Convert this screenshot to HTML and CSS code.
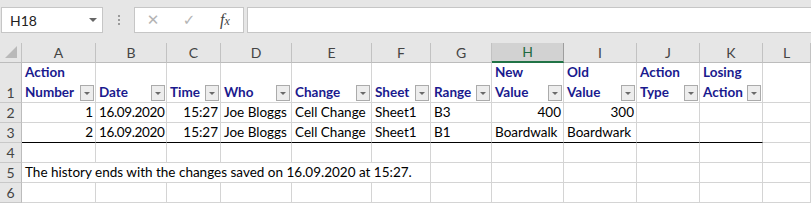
FILE: index.html
```html
<!DOCTYPE html>
<html lang="en">
<head>
    <meta charset="UTF-8">
    <title>History</title>
    <link rel="stylesheet" href="styles.css">
</head>
<body>
    <div class="toolbar">
        <div class="namebox">
            <span>H18</span>
            <span class="caret"></span>
        </div>
        <div class="grip"><i></i><i></i><i></i></div>
        <div class="fbuttons">
            <span class="fb cancel">✕</span>
            <span class="fb enter">✓</span>
            <span class="fb fx">f<small>x</small></span>
        </div>
        <div class="formula"></div>
    </div>

    <div class="sheet">
        <!-- column headers -->
        <div class="hd corner"><span class="tri"></span></div>
        <div class="hd">A</div>
        <div class="hd">B</div>
        <div class="hd">C</div>
        <div class="hd">D</div>
        <div class="hd">E</div>
        <div class="hd">F</div>
        <div class="hd">G</div>
        <div class="hd sel">H</div>
        <div class="hd">I</div>
        <div class="hd">J</div>
        <div class="hd">K</div>
        <div class="hd">L</div>

        <!-- row 1: table header -->
        <div class="rh tall">1</div>
        <div class="c th"><span>Action<br>Number</span><b class="flt"></b></div>
        <div class="c th"><span>Date</span><b class="flt"></b></div>
        <div class="c th"><span>Time</span><b class="flt"></b></div>
        <div class="c th"><span>Who</span><b class="flt"></b></div>
        <div class="c th"><span>Change</span><b class="flt"></b></div>
        <div class="c th"><span>Sheet</span><b class="flt"></b></div>
        <div class="c th"><span>Range</span><b class="flt"></b></div>
        <div class="c th"><span>New<br>Value</span><b class="flt"></b></div>
        <div class="c th"><span>Old<br>Value</span><b class="flt"></b></div>
        <div class="c th"><span>Action<br>Type</span><b class="flt"></b></div>
        <div class="c th"><span>Losing<br>Action</span><b class="flt"></b></div>
        <div class="c"></div>

        <!-- row 2 -->
        <div class="rh">2</div>
        <div class="c num">1</div>
        <div class="c date">16.09.2020</div>
        <div class="c num">15:27</div>
        <div class="c">Joe Bloggs</div>
        <div class="c">Cell Change</div>
        <div class="c">Sheet1</div>
        <div class="c">B3</div>
        <div class="c num">400</div>
        <div class="c num">300</div>
        <div class="c"></div>
        <div class="c"></div>
        <div class="c"></div>

        <!-- row 3 -->
        <div class="rh">3</div>
        <div class="c num last">2</div>
        <div class="c date last">16.09.2020</div>
        <div class="c num last">15:27</div>
        <div class="c last">Joe Bloggs</div>
        <div class="c last">Cell Change</div>
        <div class="c last">Sheet1</div>
        <div class="c last">B1</div>
        <div class="c last">Boardwalk</div>
        <div class="c last">Boardwark</div>
        <div class="c last"></div>
        <div class="c last"></div>
        <div class="c"></div>

        <!-- row 4 -->
        <div class="rh">4</div>
        <div class="c"></div><div class="c"></div><div class="c"></div><div class="c"></div>
        <div class="c"></div><div class="c"></div><div class="c"></div><div class="c"></div>
        <div class="c"></div><div class="c"></div><div class="c"></div><div class="c"></div>

        <!-- row 5: note runs over A to F -->
        <div class="rh">5</div>
        <div class="c note">The history ends with the changes saved on 16.09.2020 at 15:27.</div>
        <div class="c"></div><div class="c"></div><div class="c"></div><div class="c"></div>
        <div class="c"></div><div class="c"></div>

        <!-- row 6 -->
        <div class="rh">6</div>
        <div class="c"></div><div class="c"></div><div class="c"></div><div class="c"></div>
        <div class="c"></div><div class="c"></div><div class="c"></div><div class="c"></div>
        <div class="c"></div><div class="c"></div><div class="c"></div><div class="c"></div>
    </div>
</body>
</html>
```

FILE: styles.css
```css
body {
    margin: 0;
    width: 811px;
    height: 204px;
    overflow: hidden;
    background: #fff;
    font-family: Lato, "Open Sans", sans-serif;
    font-size: 13.5px;
    color: #000;
}

/* formula bar */
.toolbar {
    display: flex;
    height: 43px;
    box-sizing: border-box;
    padding-top: 7px;
    background: #e6e6e6;
}
.namebox {
    display: flex;
    align-items: center;
    justify-content: space-between;
    width: 102px;
    height: 26px;
    margin-left: 1px;
    box-sizing: border-box;
    padding: 0 5px 0 8px;
    background: #fff;
    border: 1px solid #c6c6c6;
    color: #222;
    font-size: 14px;
}
.caret {
    width: 0;
    height: 0;
    border-left: 4px solid transparent;
    border-right: 4px solid transparent;
    border-top: 4px solid #666;
}
.grip {
    display: flex;
    flex-direction: column;
    justify-content: center;
    gap: 2px;
    width: 31px;
    height: 26px;
    align-items: center;
}
.grip i {
    width: 2px;
    height: 2px;
    background: #9a9a9a;
}
.fbuttons {
    display: flex;
    align-items: center;
    width: 110px;
    height: 26px;
    box-sizing: border-box;
    background: #fff;
    border: 1px solid #c6c6c6;
}
.fb {
    width: 36px;
    text-align: center;
    color: #b4b4b4;
    font-family: "DejaVu Sans", sans-serif;
    font-size: 15px;
}
.fb.fx {
    color: #444;
    font-family: "Liberation Serif", serif;
    font-style: italic;
    font-size: 16px;
}
.fb.fx small {
    font-size: 12px;
}
.formula {
    flex: 1;
    height: 26px;
    margin-left: 3px;
    box-sizing: border-box;
    background: #fff;
    border: 1px solid #c6c6c6;
    border-right: 0;
}

/* grid */
.sheet {
    display: grid;
    grid-template-columns: 22px 74px 71px 54px 71px 80px 59px 61px 72px 73px 63px 63px 1fr;
    grid-template-rows: 20px 40px 20px 20px 20px 20px 20px;
}
.hd {
    background: #e6e6e6;
    border-right: 1px solid #c2c2c2;
    border-bottom: 1px solid #bcbcbc;
    color: #444;
    text-align: center;
    line-height: 19px;
    font-size: 14px;
    box-sizing: border-box;
}
.hd.sel {
    background: #d2d2d2;
    color: #1e6b41;
    border-right-color: #9e9e9e;
    border-bottom: 2px solid #217346;
    line-height: 18px;
}
.corner {
    position: relative;
}
.corner .tri {
    position: absolute;
    right: 4px;
    bottom: 4px;
    width: 0;
    height: 0;
    border-left: 12px solid transparent;
    border-bottom: 12px solid #b9b9b9;
}
.rh {
    background: #e6e6e6;
    border-right: 1px solid #bcbcbc;
    border-bottom: 1px solid #c8c8c8;
    color: #444;
    text-align: center;
    line-height: 19px;
    font-size: 14px;
    box-sizing: border-box;
}
.rh.tall {
    display: flex;
    align-items: flex-end;
    justify-content: center;
}
.c {
    border-right: 1px solid #d4d4d4;
    border-bottom: 1px solid #d4d4d4;
    box-sizing: border-box;
    padding: 0 1px 0 3px;
    line-height: 19px;
    white-space: nowrap;
    overflow: hidden;
}
.c.num {
    text-align: right;
    padding-right: 2px;
}
.c.date {
    letter-spacing: -0.35px;
}
.c.last {
    border-bottom-color: #000;
}
.c.note {
    grid-column: span 6;
    overflow: visible;
}
.th {
    display: flex;
    align-items: flex-end;
    justify-content: space-between;
    padding: 0 1px 1px 3px;
    color: #1a1a8e;
    font-weight: bold;
}
.th span {
    white-space: nowrap;
    line-height: 20px;
    margin-bottom: -1px;
}
.flt {
    flex: none;
    width: 14px;
    height: 16px;
    box-sizing: border-box;
    background: #ededed;
    border: 1px solid #ababab;
    position: relative;
}
.flt::after {
    content: "";
    position: absolute;
    left: 3px;
    top: 6px;
    border-left: 3px solid transparent;
    border-right: 3px solid transparent;
    border-top: 3px solid #6a6a6a;
}
```
